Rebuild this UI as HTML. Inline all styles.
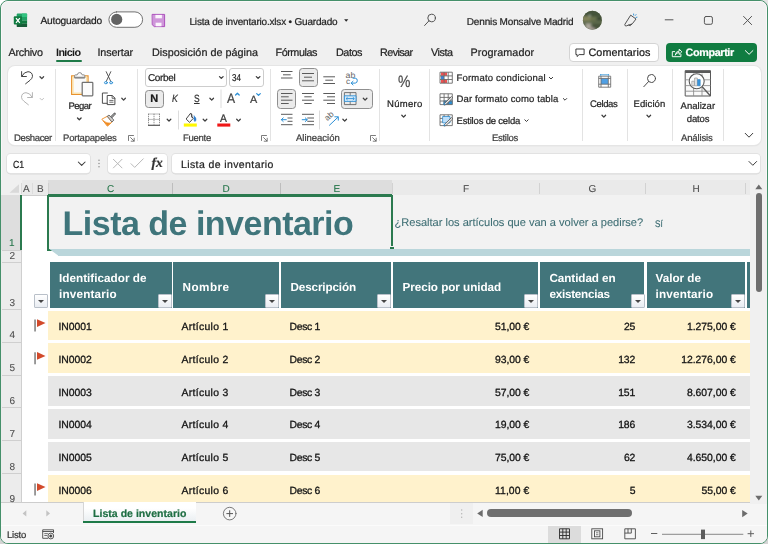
<!DOCTYPE html>
<html lang="es">
<head>
<meta charset="utf-8">
<title>Lista de inventario.xlsx - Excel</title>
<style>
html,body{margin:0;padding:0;background:#d4d4d4;}
body{width:768px;height:544px;overflow:hidden;position:relative;font-family:"Liberation Sans",sans-serif;}
#win{position:absolute;left:0;top:0;width:766px;height:542px;border:1px solid #45906a;border-radius:8px;background:#f0f0f0;overflow:hidden;}
#stage{position:absolute;left:-1px;top:-1px;width:768px;height:544px;}
#txt{position:absolute;left:0;top:0;width:768px;height:544px;will-change:transform;}
.a{position:absolute;}
.t{position:absolute;white-space:nowrap;line-height:1;text-rendering:geometricPrecision;-webkit-text-stroke:.22px currentColor;color:#242424;font-family:"Liberation Sans",sans-serif;}
.sep{position:absolute;width:1.200px;background:#e3e3e3;top:68.700px;height:72.300px;}
.box{position:absolute;background:#fff;border:1px solid #dcdcdc;border-radius:4px;box-sizing:border-box;}
.fbx{position:absolute;top:153.600px;height:19.400px;background:#fff;border-radius:3.500px;box-shadow:0 0 0 .9px #e2e2e2,0 .8px 0 .6px #d9d9d9;}
.sel{position:absolute;background:#ebebeb;border:1px solid #8f8f8f;border-radius:3.5px;box-sizing:border-box;}
.hc{position:absolute;background:#42757b;top:262px;height:46px;}
.fb{position:absolute;top:294px;width:14px;height:14px;background:linear-gradient(#ffffff,#e9edf2);border:1px solid #b9c0c9;box-sizing:border-box;border-radius:1px;}
.fb:after{content:"";position:absolute;left:3.100px;top:4.700px;border-left:3px solid transparent;border-right:3px solid transparent;border-top:3.500px solid #454545;}
.row{position:absolute;left:48px;width:701.500px;height:29.800px;}
.y{background:#fff2cc;}
.g{background:#e7e7e7;}
.cd{position:absolute;top:182.500px;width:1px;height:11.500px;background:#d2d2d2;}
.rd{position:absolute;left:2px;width:19px;height:1px;background:#cfcfcf;}
svg{position:absolute;overflow:visible;text-rendering:geometricPrecision;}
</style>
</head>
<body>
<div class="a" style="left:0;top:0;width:10px;height:10px;background:#fff;"></div><div class="a" style="left:758px;top:0;width:10px;height:10px;background:#e4e4e4;"></div>
<div id="win"><div id="stage">
<!-- inner highlight of window frame -->
<div class="a" style="left:1px;top:1px;width:764px;height:540px;border:1px solid #faf7f8;border-radius:7px;"></div>
<!-- ===== ribbon panel ===== -->
<div class="a" style="left:8px;top:65.500px;width:752.500px;height:79.500px;background:#fff;border-radius:7px;box-shadow:0 0 0 1px #e5e5e5,0 1px 1.500px rgba(0,0,0,.10);"></div>
<!-- tab underline -->
<div class="a" style="left:56px;top:60px;width:26px;height:2px;background:#1e7a48;border-radius:1px;"></div>
<!-- Comentarios / Compartir buttons -->
<div class="box" style="left:568.800px;top:42.600px;width:89.800px;height:19px;border-color:#d4d4d4;"></div>
<div class="a" style="left:666px;top:42.500px;width:91.400px;height:19.300px;background:#107c41;border-radius:4px;"></div>
<!-- ribbon separators -->
<div class="sep" style="left:55px"></div><div class="sep" style="left:137px"></div><div class="sep" style="left:269.500px"></div>
<div class="sep" style="left:379px"></div><div class="sep" style="left:429.300px"></div><div class="sep" style="left:582px"></div>
<div class="sep" style="left:626.500px"></div><div class="sep" style="left:672px"></div><div class="sep" style="left:723px"></div>
<!-- font boxes -->
<div class="box" style="left:144.600px;top:68.200px;width:82px;height:18.400px;border-color:#cdcdcd;border-radius:3px;"></div>
<div class="box" style="left:229px;top:68.200px;width:34.600px;height:18.400px;border-color:#cdcdcd;border-radius:3px;"></div>
<!-- selected toggle buttons -->
<div class="sel" style="left:144.800px;top:89.500px;width:19.200px;height:18.800px;"></div>
<div class="sel" style="left:298.500px;top:68px;width:19px;height:19.300px;"></div>
<div class="sel" style="left:277.300px;top:89px;width:19px;height:19.500px;"></div>
<div class="sel" style="left:340.500px;top:89px;width:32.300px;height:19.500px;"></div>
<!-- ===== formula bar ===== -->
<div class="fbx" style="left:7.400px;width:82.500px;"></div>
<div class="fbx" style="left:107.800px;width:59px;"></div>
<div class="fbx" style="left:171.800px;width:588.600px;"></div>
<!-- ===== grid ===== -->
<div class="a" style="left:1px;top:180px;width:748.500px;height:322px;background:#fff;"></div>
<!-- column header strip -->
<div class="a" style="left:1px;top:180px;width:748.500px;height:15px;background:#eaeaea;"></div>
<div class="a" style="left:1px;top:180px;width:20.500px;height:15px;background:#f0f0f0;"></div>
<div class="a" style="left:48px;top:180px;width:344px;height:14px;background:#dddddd;"></div>
<div class="a" style="left:1px;top:194.500px;width:748.500px;height:1px;background:#cfcfcf;"></div>
<div class="a" style="left:48px;top:193.700px;width:344px;height:2px;background:#2b7a4f;"></div>
<div class="cd" style="left:21px;background:#d9d9d9"></div><div class="cd" style="left:31.500px;background:#dcdcdc"></div><div class="cd" style="left:47.500px;background:#d0d0d0"></div>
<div class="cd" style="left:172px;background:#bdbdbd"></div><div class="cd" style="left:279.500px;background:#bdbdbd"></div><div class="cd" style="left:391.500px"></div>
<div class="cd" style="left:538.500px"></div><div class="cd" style="left:645px"></div><div class="cd" style="left:745px"></div>
<!-- row header strip -->
<div class="a" style="left:1px;top:195px;width:20.500px;height:307px;background:#ececec;"></div>
<div class="a" style="left:1px;top:195px;width:20px;height:54.500px;background:#dedede;"></div>
<div class="a" style="left:20px;top:195px;width:2px;height:54.800px;background:#2b7a4f;"></div>
<div class="a" style="left:21px;top:249.800px;width:1px;height:252px;background:#cfcfcf;"></div>
<div class="rd" style="top:249.500px"></div><div class="rd" style="top:262px"></div><div class="rd" style="top:308.500px"></div><div class="rd" style="top:341.500px"></div>
<div class="rd" style="top:374.500px"></div><div class="rd" style="top:407.300px"></div><div class="rd" style="top:440px"></div><div class="rd" style="top:473px"></div>
<!-- row 1 background -->
<div class="a" style="left:48px;top:195px;width:701.500px;height:55px;background:#f2f2f2;"></div>
<!-- selection border C1:E1 -->
<div class="a" style="left:47.300px;top:194.800px;width:345.800px;height:56px;border:2px solid #2b7a4f;box-sizing:border-box;"></div>
<div class="a" style="left:389px;top:246.300px;width:6px;height:4px;background:#f2f2f2;"></div>
<div class="a" style="left:390px;top:247.300px;width:4px;height:3px;background:#2b7a4f;"></div>
<!-- light blue band (drawn over the selection's bottom edge) -->
<div class="a" style="left:49.300px;top:249.100px;width:700.200px;height:6.900px;background:#bad6db;clip-path:polygon(0 0,100% 0,100% 100%,9.500px 100%);"></div>
<div class="a" style="left:58px;top:249.100px;width:691.500px;height:6.900px;background:#bad6db;"></div>
<!-- header cells -->
<div class="hc" style="left:50px;width:121.500px"></div>
<div class="hc" style="left:173px;width:105.500px"></div>
<div class="hc" style="left:281px;width:109.500px"></div>
<div class="hc" style="left:393px;width:144.500px"></div>
<div class="hc" style="left:540px;width:104px"></div>
<div class="hc" style="left:646.500px;width:98px"></div>
<div class="hc" style="left:747px;width:2.500px"></div>
<div class="fb" style="left:34px"></div><div class="fb" style="left:157.700px"></div><div class="fb" style="left:265px"></div>
<div class="fb" style="left:377px"></div><div class="fb" style="left:524px"></div><div class="fb" style="left:630.500px"></div><div class="fb" style="left:731px"></div>
<!-- data rows -->
<div class="row y" style="top:310.500px"></div>
<div class="row y" style="top:343.300px"></div>
<div class="row g" style="top:376.100px"></div>
<div class="row g" style="top:408.900px"></div>
<div class="row g" style="top:441.700px"></div>
<div class="row y" style="top:474.500px"></div>
<!-- vertical scrollbar -->
<div class="a" style="left:749.500px;top:180px;width:17.500px;height:324px;background:#f0f0f0;"></div>
<div class="a" style="left:755.500px;top:193px;width:6.500px;height:98.500px;background:#6e6e6e;border-radius:3.500px;"></div>
<!-- sheet tab bar + status bar -->
<div class="a" style="left:1px;top:502px;width:748.500px;height:41px;background:#f5f5f5;"></div>
<div class="a" style="left:749.500px;top:504px;width:17.500px;height:39px;background:#f5f5f5;"></div>
<div class="a" style="left:1px;top:502px;width:748.500px;height:1px;background:#cdcdcd;"></div>
<div class="a" style="left:1px;top:524.500px;width:766px;height:1px;background:#fbfbfb;"></div>
<div class="a" style="left:450.300px;top:503.300px;width:22.700px;height:21.200px;background:#efefef;"></div>
<div class="a" style="left:82.700px;top:502px;width:113.300px;height:20px;background:linear-gradient(#ffffff 30%,#e9eef1);border-left:1px solid #d6d6d6;box-sizing:border-box;"></div>
<div class="a" style="left:82.700px;top:520.800px;width:113.300px;height:2.200px;background:#1e7a48;"></div>
<div class="a" style="left:486.700px;top:509.300px;width:145.600px;height:7.800px;background:#6f6f6f;border-radius:4px;"></div>
<div class="a" style="left:548.300px;top:526px;width:32.400px;height:17px;background:#dcdcdc;"></div>
<!-- ===== icon overlay (page coordinates) ===== -->
<svg class="a" style="left:0;top:0" width="768" height="544" viewBox="0 0 768 544" fill="none" stroke-linecap="round" stroke-linejoin="round">
<defs>
<radialGradient id="av" cx="0.45" cy="0.4" r="0.7"><stop offset="0" stop-color="#5a6647"/><stop offset="0.6" stop-color="#4a553a"/><stop offset="1" stop-color="#6f735f"/></radialGradient>
<linearGradient id="clip" x1="0" y1="0" x2="0" y2="1"><stop offset="0" stop-color="#fff"/><stop offset="1" stop-color="#fdecc8"/></linearGradient>
<clipPath id="avc"><circle cx="592.4" cy="20.3" r="9.5"/></clipPath>
<filter id="soft" x="-20%" y="-20%" width="140%" height="140%"><feGaussianBlur stdDeviation="1.1"/></filter>
</defs>
<!-- Excel logo -->
<g stroke="none">
<path d="M17.6 13.6h8.6a.9.9 0 0 1 .9.9v2.5H16.7v-2.5a.9.9 0 0 1 .9-.9z" fill="#21a366"/>
<path d="M22 13.6h4.2a.9.9 0 0 1 .9.9v2.5H22z" fill="#33c481"/>
<rect x="16.7" y="17" width="5.3" height="3.4" fill="#107c41"/><rect x="22" y="17" width="5.1" height="3.4" fill="#21a366"/>
<rect x="16.7" y="20.4" width="5.3" height="3.4" fill="#185c37"/><rect x="22" y="20.4" width="5.1" height="3.4" fill="#107c41"/>
<path d="M16.7 23.8h10.4v2.4a.9.9 0 0 1-.9.9h-8.6a.9.9 0 0 1-.9-.9z" fill="#185c37"/>
<rect x="13.8" y="16.3" width="8.2" height="8.2" rx="0.9" fill="#107c41"/>
<path d="M16 18.2l3.8 4.6M19.8 18.2L16 22.8" stroke="#fff" stroke-width="1.25" stroke-linecap="butt"/>
</g>
<!-- autosave toggle -->
<rect x="108.9" y="11.9" width="33.7" height="15.4" rx="7.7" fill="#fff" stroke="#616161" stroke-width="0.9"/>
<circle cx="116.7" cy="19.4" r="5.6" fill="#636363"/>
<!-- save icon -->
<path d="M152.5 14.4h12.1v12.2h-10.3l-1.8-1.6z" fill="#cf96da" stroke="#a644b8" stroke-width="0.9" stroke-linejoin="miter"/>
<rect x="155.4" y="14.9" width="6.5" height="3.4" fill="#fbf4fc"/>
<rect x="155.6" y="22.7" width="5.9" height="3.6" fill="#fbf4fc"/>
<!-- title dropdown arrow -->
<path d="M344.100 19.300h4.200l-2.100 2.500z" fill="#262626" stroke="none"/>
<!-- search -->
<circle cx="431.6" cy="18" r="3.8" stroke="#4a4a4a" stroke-width="0.95"/>
<path d="M428.9 20.9l-4.3 4.6" stroke="#4a4a4a" stroke-width="0.95"/>
<!-- avatar -->
<circle cx="592.400" cy="20.300" r="9.500" fill="#505d42" stroke="none"/>
<g clip-path="url(#avc)" stroke="none" filter="url(#soft)">
<rect x="582" y="10" width="21" height="6.500" fill="#44533a"/>
<rect x="582" y="16.300" width="9.500" height="4.600" fill="#83835a"/>
<rect x="590" y="17" width="6" height="3.500" fill="#6c7550"/>
<rect x="582" y="21" width="21" height="2.500" fill="#5d6a4b"/>
<rect x="585.400" y="23.400" width="5.800" height="5.600" fill="#aaa69a"/>
<rect x="589" y="27.300" width="6" height="3" fill="#a89c98"/>
<rect x="588.700" y="14.800" width="1.800" height="1.800" fill="#a4b0a6"/>
<rect x="597.800" y="18" width="3.200" height="1.500" fill="#272f25"/>
<rect x="593" y="24" width="9" height="4" fill="#46523a"/>
</g>
<!-- megaphone -->
<g stroke="#4a4a4a" stroke-width="0.95">
<path d="M631 15.400l5 3.600-3.700 4.800-6 2.100q-1.600.4-1.500-1.100z"/>
<path d="M628.700 25.200q1.500 1.900 3.100-.9"/>
</g>
<g stroke="#2b8fd6" stroke-width="0.95"><path d="M633.6 14v1M636 14.6l-.7.8M637 17.200l-1 .2"/></g>
<!-- window controls -->
<g stroke="#555" stroke-width="1">
<path d="M665.2 19.8h7.8"/>
<rect x="704.4" y="16.5" width="8" height="7.8" rx="1.6"/>
<path d="M743.6 16.400l8 8.200M751.600 16.400l-8 8.200"/>
</g>
<!-- comments icon -->
<path d="M576.3 49h7.800v5.600h-5l-2 1.900v-1.900h-.8z" stroke="#2a2a2a" stroke-width="0.9" stroke-linejoin="miter"/>
<!-- share icon + chevron -->
<g stroke="#fff" stroke-width="0.95">
<path d="M674.6 51.6h-2.300v5.100h8.600v-2.300"/>
<path d="M675.300 54.800q.3-3.600 3.900-3.700v-2l2.600 2.700-2.600 2.600v-1.900q-2.400-.1-3.900 2.300z"/>
<path d="M745.300 50.600l3.800 3.700 3.800-3.700" stroke-width="1"/>
</g>
<!-- ===== ribbon icons ===== -->
<!-- undo / redo -->
<g stroke="#454545" stroke-width="1">
<path d="M21.600 71.600v4.900h4.800"/>
<path d="M21.800 76.300q2.300-4.600 6.200-4.600 4.400.2 4.500 4.600-.2 2.200-2.500 4l-4.400 3.500"/>
<path d="M40 76.800l1.800 1.800 1.800-1.800" stroke-width="1.300"/>
</g>
<g stroke="#b4b4b4" stroke-width="1">
<path d="M32.400 92.600v4.900h-4.800"/>
<path d="M32.200 97.300q-2.300-4.600-6.200-4.600-4.400.2-4.500 4.600.2 2.200 2.500 4l4.400 3.500"/>
<path d="M40 98.300l1.800 1.800 1.800-1.800" stroke="#c4c4c4"/>
</g>
<!-- paste -->
<path d="M71.700 75.800h16.300v18.600h-16.300z" fill="#fafafa" stroke="#e8922f" stroke-width="1.300" stroke-linejoin="miter"/>
<path d="M73 77.100h13.700v16h-13.700z" stroke="#fde4ab" stroke-width="1.300" stroke-linejoin="miter"/>
<path d="M74.600 77.600v-1.900q0-.8.800-.8h1.800q.5-2.300 2.500-2.300t2.500 2.300h1.800q.8 0 .8.800v1.900z" fill="#fbfbfb" stroke="#8a8a8a" stroke-width="1"/>
<path d="M74.600 77.500h10.200" stroke="#8a8a8a" stroke-width="1.500" stroke-linecap="butt"/>
<rect x="82.200" y="82.400" width="10.600" height="13.400" rx="0.700" fill="#fcfcfc" stroke="#727272" stroke-width="1.250"/>
<path d="M77.500 118l1.800 1.800 1.800-1.800" stroke="#3d3d3d" stroke-width="1.300"/>
<!-- cut -->
<g stroke="#454545" stroke-width="0.9"><path d="M106.200 71.700l4.500 9.600M110.800 71.700l-4.500 9.600"/></g>
<g stroke="#2b8fd6" stroke-width="0.95"><ellipse cx="105.900" cy="82.700" rx="1.500" ry="1.100"/><ellipse cx="111.100" cy="82.700" rx="1.500" ry="1.100"/></g>
<!-- copy -->
<g stroke="#454545" stroke-width="0.95">
<path d="M107.400 93h-5v10.300h5"/>
<path d="M107.600 95.500h4.700l2.600 2.600v6.500h-7.300z" fill="#fff"/>
<path d="M112.100 95.600v2.700h2.700" stroke-width="0.8"/>
<path d="M109.700 100.400h3.400M109.700 102.200h3.400" stroke-width="0.8"/>
<path d="M121.800 98.300l1.800 1.800 1.800-1.800" stroke-width="1.300"/>
</g>
<!-- format painter -->
<path d="M102.200 119l5.300-2.800 4.700 5.600-4.500 4z" fill="#fff" stroke="#ee8a22" stroke-width="0.900"/>
<path d="M103.400 120.900q3.600 2.600 7.400 2.200l-3.100 2.700z" fill="#f08c22" stroke="#ee8a22" stroke-width="0.600"/>
<path d="M110.900 117.600l3.800-3.800" stroke="#5a5a5a" stroke-width="2.300" stroke-linecap="round"/>
<path d="M111.100 117.400l3.500-3.500" stroke="#d6d6d6" stroke-width="0.800" stroke-linecap="round"/>
<path d="M107.500 116.200l1.500-1.200 4.900 5.100-1.700 1.700z" fill="#cfcfcf" stroke="#555" stroke-width="0.800"/>
<!-- launcher icons -->
<g stroke="#5a5a5a" stroke-width="0.8">
<path d="M128.500 140.500v-5h5M130.600 137.600l3.400 3.400M134.200 138.200v3h-3"/>
<path d="M261.500 140.500v-5h5M263.600 137.600l3.400 3.400M267.200 138.200v3h-3"/>
<path d="M370.500 140.500v-5h5M372.600 137.600l3.400 3.400M376.200 138.200v3h-3"/>
</g>
<!-- font box chevrons -->
<g stroke="#3d3d3d" stroke-width="1.300">
<path d="M219.500 76.600l1.800 1.800 1.800-1.800"/><path d="M256.300 76.600l1.800 1.800 1.800-1.800"/>
<path d="M209.900 98.300l1.800 1.800 1.800-1.800"/>
<path d="M167.200 119.300l1.800 1.800 1.800-1.800"/><path d="M203.200 119.300l1.800 1.800 1.800-1.800"/><path d="M236.700 119.300l1.800 1.800 1.800-1.800"/>
<path d="M342.900 119.300l1.800 1.800 1.800-1.800"/><path d="M363.300 98.300l1.800 1.800 1.800-1.800"/>
</g>
<!-- grow / shrink carets -->
<g stroke="#2b8fd6" stroke-width="1.250"><path d="M235.600 95l1.800-1.800 1.800 1.800"/><path d="M256.700 93.600l1.800 1.800 1.800-1.800"/></g>
<!-- small separators -->
<g stroke="#dcdcdc" stroke-width="1" stroke-linecap="butt"><path d="M221 89.500v18.500M178.500 110.500v19M319.500 110.500v19"/></g>
<!-- borders icon -->
<g stroke="#666" stroke-width="0.9" stroke-dasharray="1 1" stroke-linecap="butt"><path d="M148.500 113.800v10.600M154 113.800v10.600M159.500 113.800v10.600M148.500 114h11M148.500 119.400h11"/></g>
<path d="M148 125.300h12" stroke="#333" stroke-width="1.1" stroke-linecap="butt"/>
<!-- fill colour -->
<path d="M190.100 113.900l-4 5.100 3.500 3.400 3.800-4.200-1.500-1.200-.2-3.100q-.8-.9-1.600 0z" fill="#fdfdfd" stroke="#3f3f3f" stroke-width="0.950"/>
<path d="M191.500 114.300l.3 2.900" stroke="#3f3f3f" stroke-width="0.800"/>
<path d="M194.100 116c2.500 1.600 2.300 4.600.9 5.600-1.200-.2-1.100-2.600-.9-5.600z" fill="#2f7fd0" stroke="#2f7fd0" stroke-width="0.500"/>
<rect x="183.800" y="123.500" width="13" height="3.100" fill="#fff800" stroke="none"/>
<!-- font colour bar -->
<rect x="217.300" y="123.500" width="13" height="3.100" fill="#f01818" stroke="none"/>
<!-- alignment icons -->
<g stroke="#5a5a5a" stroke-width="1" stroke-linecap="butt">
<path d="M281 71.500h11.500M283 74.800h7.700M281 78h11.500"/>
<path d="M302 73.500h12M304 77.200h8M302 80.800h12"/>
<path d="M323.300 76.800h11.700M325.300 80.200h7.700M323.300 83.500h11.700"/>
<path d="M281 93.500h11.500M281 96.800h7.700M281 100.200h11.500M281 103.500h7.700"/>
<path d="M302 93.500h12M304.300 96.800h7.400M302 100.200h12M304.300 103.500h7.400"/>
<path d="M323.300 93.500h11.700M327 96.800h8M323.300 100.200h11.700M327 103.500h8"/>
<path d="M281 114.300h11.500M287.500 118h5M287.500 121.300h5M281 124.700h11.500"/>
<path d="M302 114.300h12M307.300 118h6.700M307.300 121.300h6.700M302 124.700h12"/>
</g>
<g stroke="#2b8fd6" stroke-width="1"><path d="M281.300 119.700h5M283.200 117.900l-1.900 1.800 1.900 1.800"/><path d="M302.200 119.700h5M305.300 117.900l1.900 1.800-1.900 1.800"/></g>
<!-- wrap-text / orientation letters -->
<g fill="#666" stroke="none" font-family="'Liberation Sans',sans-serif" font-size="8.200">
<text x="345.600" y="77.800" textLength="9.800" lengthAdjust="spacingAndGlyphs">ab</text>
<text x="345.900" y="83.600">c</text>
<text x="327.300" y="121.300" transform="rotate(-42 327.300 121.300)" textLength="9.600" lengthAdjust="spacingAndGlyphs">ab</text>
</g>
<!-- wrap-text arrow -->
<path d="M353 78.200h2.300q2 .2 2 2.400t-2 2.500h-4M353 81.300l-1.900 1.800 1.900 1.800" stroke="#2b8fd6" stroke-width="1"/>
<!-- merge & centre -->
<g stroke-linecap="butt">
<rect x="344.400" y="92.600" width="11.600" height="12" stroke="#666" stroke-width="0.9"/>
<rect x="344.400" y="95.800" width="11.600" height="5.600" fill="#d6eafa" stroke="#2b8fd6" stroke-width="0.9"/>
<path d="M350.200 92.600v3M350.200 101.500v3" stroke="#666" stroke-width="0.8"/>
<path d="M346.200 98.600h8M347.600 97.200l-1.500 1.400 1.500 1.400M352.800 97.200l1.500 1.400-1.500 1.400" stroke="#2b8fd6" stroke-width="0.9"/>
</g>
<!-- orientation arrow -->
<path d="M329.500 125.200l8.500-8M334.800 116.800h3.500v3.400" stroke="#2b8fd6" stroke-width="1"/>
<!-- number chevrons etc -->
<g stroke="#3d3d3d" stroke-width="1.300">
<path d="M401.800 115.300l1.800 1.800 1.800-1.800"/>
<path d="M602 115.300l1.800 1.800 1.800-1.800"/>
<path d="M647 115.300l1.800 1.800 1.800-1.800"/>
<path d="M549.300 77.300l1.700 1.700 1.700-1.700" stroke-width="1"/>
<path d="M563.300 98.500l1.700 1.700 1.700-1.700" stroke-width="1"/>
<path d="M524.800 119.800l1.700 1.700 1.700-1.700" stroke-width="1"/>
<path d="M745.200 133.300l3.800 3.900 3.800-3.900" stroke-width="1"/>
</g>
<!-- conditional formatting -->
<g stroke-linecap="butt">
<rect x="441" y="72.300" width="6" height="3.500" fill="#ee5050" stroke="none"/>
<rect x="441" y="79.500" width="6" height="3.500" fill="#ee5050" stroke="none"/>
<rect x="441" y="75.900" width="3" height="3.500" fill="#3b86d6" stroke="none"/>
<path d="M440 72.200h12.300v11h-12.300zM440 75.900h12.300M440 79.500h12.300M444.100 72.200v11M448.200 72.200v11" stroke="#6b6b6b" stroke-width="0.9"/>
<!-- format as table -->
<rect x="443.500" y="100.500" width="9" height="4.200" fill="#2b8fd6" stroke="none"/>
<path d="M440 93.800h12.300v10.800h-12.300zM440 97.400h12.300M440 101h12.300M444.100 93.800v10.800M448.200 93.800v10.800" stroke="#6b6b6b" stroke-width="0.9"/>
<path d="M444.700 103.200l6.800-6.600 1.300 1.300-6.800 6.600-2 .6z" fill="#eaeaea" stroke="#4f4f4f" stroke-width="0.8"/>
<path d="M443.300 104.800l2.400-.4-1.700-1.600z" fill="#2b8fd6" stroke="none"/>
<!-- cell styles -->
<rect x="442.600" y="116.500" width="7.400" height="6.400" fill="#bfe0fb" stroke="#2b8fd6" stroke-width="0.8"/>
<path d="M440 114.800h12.300v10.800h-12.300zM440 118.400h2.600M440 122h2.600M450 118.400h2.300M444.100 114.800v1.700M448.200 114.800v1.700" stroke="#6b6b6b" stroke-width="0.9"/>
<path d="M444.700 124.200l6.800-6.600 1.300 1.300-6.800 6.600-2 .6z" fill="#eaeaea" stroke="#4f4f4f" stroke-width="0.8"/>
<path d="M443.300 125.900l2.400-.4-1.700-1.600z" fill="#2b8fd6" stroke="none"/>
<!-- cells -->
<rect x="601" y="78.400" width="7.200" height="5.800" fill="#4f9fe4" stroke="none"/>
<path d="M598.700 76.200h12v11h-12zM598.700 78.400h12M598.700 84.200h12M601 76.200v11M608.300 76.200v11" stroke="#6a6a6a" stroke-width="0.85"/>
<path d="M600.600 74.800h8M600.600 74v1.700M608.600 74v1.700" stroke="#2b8fd6" stroke-width="0.8"/>
</g>
<!-- editing (search) -->
<circle cx="651.500" cy="78.500" r="4" stroke="#4a4a4a" stroke-width="1"/>
<path d="M648.600 81.500l-4.800 5.200" stroke="#4a4a4a" stroke-width="1"/>
<!-- analyse data -->
<g stroke-linecap="butt">
<rect x="685.200" y="70.700" width="25.300" height="25.300" fill="#fafafa" stroke="#595959" stroke-width="1"/>
<rect x="685.200" y="70.700" width="25.300" height="2.300" fill="#595959" stroke="none"/>
<path d="M685.200 79.800h25.300M685.200 85.600h25.300M685.200 91.200h25.300M693.600 73.700v22.300M702 73.700v22.300" stroke="#8a8a8a" stroke-width="0.85"/>
<circle cx="696.700" cy="81.300" r="7.500" fill="#fff" stroke="#595959" stroke-width="1.1"/>
<path d="M702.200 86.800l8.300 9.200" stroke="#595959" stroke-width="1.3"/>
<rect x="691.800" y="81.200" width="2.500" height="4.600" fill="#e6e6e6" stroke="#8a8a8a" stroke-width="0.6"/>
<rect x="694.600" y="78" width="2.700" height="7.800" fill="#e6e6e6" stroke="#8a8a8a" stroke-width="0.6"/>
<rect x="697.600" y="79.600" width="2.600" height="6.200" fill="#3a96dd" stroke="#2b7cc0" stroke-width="0.6"/>
</g>
<!-- ===== formula bar icons ===== -->
<path d="M78.300 162l3.400 3.400 3.400-3.400" stroke="#3a3a3a" stroke-width="1.050"/>
<g fill="#858585" stroke="none"><circle cx="99" cy="160.300" r=".7"/><circle cx="99" cy="163.500" r=".7"/><circle cx="99" cy="166.700" r=".7"/></g>
<path d="M113.400 159.300l8.600 8.600M122 159.300l-8.600 8.600" stroke="#b9b9b9" stroke-width="1"/>
<path d="M131 163.700l3.700 3.700 8.600-8.600" stroke="#b9b9b9" stroke-width="1"/>
<path d="M749 161.500l3.800 3.800 3.800-3.800" stroke="#3a3a3a" stroke-width="1"/>
<!-- select-all triangle -->
<path d="M19 184.300v8.400h-9.400z" fill="#d9d9d9" stroke="none"/>
<!-- flags -->
<g stroke="none"><rect x="34.300" y="319.500" width="1.500" height="12" fill="#7d7d7d"/><path d="M37 319.200l8.500 3.900-8.500 3.900z" fill="#d24a2b"/></g>
<g stroke="none" transform="translate(0 32.800)"><rect x="34.300" y="319.500" width="1.500" height="12" fill="#7d7d7d"/><path d="M37 319.200l8.500 3.900-8.500 3.900z" fill="#d24a2b"/></g><g stroke="none" transform="translate(0 164)"><rect x="34.300" y="319.500" width="1.500" height="12" fill="#7d7d7d"/><path d="M37 319.200l8.500 3.900-8.500 3.900z" fill="#d24a2b"/></g>
<!-- vertical scrollbar arrows -->
<g fill="#6c6c6c" stroke="none"><path d="M755.300 189.200l3.500-4.700 3.500 4.700z"/><path d="M755.300 495.700l3.500 4.700 3.500-4.700z"/>
<path d="M482.700 509.700v7.400l-5.500-3.700z"/><path d="M742.200 509.900v7.400l5.500-3.700z"/></g>
<!-- sheet nav arrows -->
<g fill="#c3c3c3" stroke="none"><path d="M26.300 510.300v6.200l-3.700-3.100z"/><path d="M46.300 510.300v6.200l3.700-3.100z"/></g>
<!-- new sheet -->
<circle cx="229.700" cy="513.600" r="6.300" stroke="#6b6b6b" stroke-width="0.9" fill="#f7f7f7"/>
<path d="M226.400 513.600h6.600M229.700 510.300v6.600" stroke="#555" stroke-width="1" stroke-linecap="butt"/>
<!-- splitter dots -->
<g fill="#b3b3b3" stroke="none"><circle cx="461.700" cy="510" r=".7"/><circle cx="461.700" cy="513.700" r=".7"/><circle cx="461.700" cy="517.300" r=".7"/></g>
<!-- status: macro icon -->
<g stroke="#3f3f3f" stroke-width="0.85" stroke-linecap="butt" stroke-linejoin="miter">
<path d="M48 538.300h-5.300v-8.500h10.800v3.200M42.700 531.500h10.800"/>
<path d="M44.300 533.600h3.600M44.300 535.500h2.800" stroke-width="0.7"/>
<circle cx="50.800" cy="536" r="2.900"/><circle cx="50.800" cy="536" r="1.100" fill="#3f3f3f"/>
</g>
<!-- view buttons -->
<g stroke="#333" stroke-width="0.95" stroke-linecap="butt" stroke-linejoin="miter">
<path d="M559.500 528.800h10v10h-10zM562.800 528.800v10M566.200 528.800v10M559.500 532.100h10M559.500 535.500h10"/>
</g>
<g stroke="#4a4a4a" stroke-width="0.9" stroke-linecap="butt" stroke-linejoin="miter">
<rect x="591.800" y="528.800" width="10.800" height="10"/><rect x="594.500" y="530.800" width="5.400" height="6"/><path d="M596 532.800h2.400M596 534.700h2.400" stroke-width="0.7"/>
<path d="M624.800 528.800h10.600v10h-10.600zM628 528.800v4.300M631.300 528.800v4.300M624.800 533.100h6.500" />
</g>
<!-- zoom slider -->
<g stroke="#5f5f5f" stroke-width="1" stroke-linecap="butt">
<path d="M651 533.500h6.300"/><path d="M662 534.300h81.300" stroke="#7d7d7d" stroke-width="0.9"/>
<path d="M747.600 533.700h6.400M750.800 530.500v6.400"/>
</g>
<rect x="701" y="529.600" width="4" height="9.500" fill="#5c5c5c" stroke="none"/>
</svg>

<!-- text labels -->
<div id="txt">
<span class="t" style="left:40.50px;top:17.37px;font-size:10.2px;letter-spacing:-0.213px;">Autoguardado</span>
<span class="t" style="left:189.50px;top:17.54px;font-size:10px;letter-spacing:-0.195px;">Lista de inventario.xlsx • Guardado</span>
<span class="t" style="left:466.80px;top:17.54px;font-size:10px;letter-spacing:-0.157px;">Dennis Monsalve Madrid</span>
<span class="t" style="left:8.50px;top:48.36px;font-size:10.8px;letter-spacing:-0.250px;">Archivo</span>
<span class="t" style="left:56.00px;top:48.36px;font-size:10.8px;letter-spacing:-0.620px;font-weight:700;color:#1a1a1a;-webkit-text-stroke-width:0;">Inicio</span>
<span class="t" style="left:97.50px;top:48.36px;font-size:10.8px;letter-spacing:-0.144px;">Insertar</span>
<span class="t" style="left:152.00px;top:48.36px;font-size:10.8px;letter-spacing:0.018px;">Disposición de página</span>
<span class="t" style="left:275.50px;top:48.36px;font-size:10.8px;letter-spacing:-0.442px;">Fórmulas</span>
<span class="t" style="left:336.00px;top:48.36px;font-size:10.8px;letter-spacing:-0.452px;">Datos</span>
<span class="t" style="left:380.00px;top:48.36px;font-size:10.8px;letter-spacing:-0.584px;">Revisar</span>
<span class="t" style="left:431.00px;top:48.36px;font-size:10.8px;letter-spacing:-0.451px;">Vista</span>
<span class="t" style="left:470.50px;top:48.36px;font-size:10.8px;letter-spacing:0.059px;">Programador</span>
<span class="t" style="left:588.50px;top:48.36px;font-size:10.8px;letter-spacing:0.069px;color:#1a1a1a;">Comentarios</span>
<span class="t" style="left:685.50px;top:48.36px;font-size:10.8px;letter-spacing:-0.361px;font-weight:700;color:#ffffff;">Compartir</span>
<span class="t" style="left:68.50px;top:102.26px;font-size:9.5px;letter-spacing:-0.547px;">Pegar</span>
<span class="t" style="left:148.00px;top:73.53px;font-size:10px;letter-spacing:-0.347px;">Corbel</span>
<span class="t" style="left:231.70px;top:73.53px;font-size:10px;transform:scaleX(0.804);transform-origin:0 0;">34</span>
<span class="t" style="left:150.20px;top:93.69px;font-size:11px;font-weight:700;color:#1a1a1a;transform:scaleX(1.000);transform-origin:0 0;">N</span>
<span class="t" style="left:172.20px;top:94.11px;font-size:10.5px;color:#333;font-style:italic;transform:scaleX(0.825);transform-origin:0 0;">K</span>
<span class="t" style="left:194.20px;top:94.11px;font-size:10.5px;color:#333;text-decoration:underline;transform:scaleX(0.800);transform-origin:0 0;">S</span>
<span class="t" style="left:227.20px;top:91.92px;font-size:13.8px;color:#444;transform:scaleX(0.880);transform-origin:0 0;">A</span>
<span class="t" style="left:249.80px;top:95.80px;font-size:10.4px;color:#444;transform:scaleX(1.043);transform-origin:0 0;">A</span>
<span class="t" style="left:220.40px;top:114.49px;font-size:11px;color:#333;transform:scaleX(0.938);transform-origin:0 0;">A</span>
<span class="t" style="left:398.00px;top:73.83px;font-size:16.5px;color:#4a4a4a;transform:scaleX(0.847);transform-origin:0 0;">%</span>
<span class="t" style="left:387.00px;top:99.96px;font-size:9.5px;letter-spacing:0.299px;">Número</span>
<span class="t" style="left:456.50px;top:73.96px;font-size:9.5px;letter-spacing:0.198px;">Formato condicional</span>
<span class="t" style="left:456.50px;top:95.16px;font-size:9.5px;letter-spacing:0.120px;">Dar formato como tabla</span>
<span class="t" style="left:456.50px;top:116.56px;font-size:9.5px;letter-spacing:-0.184px;">Estilos de celda</span>
<span class="t" style="left:590.00px;top:99.96px;font-size:9.5px;letter-spacing:-0.364px;">Celdas</span>
<span class="t" style="left:633.50px;top:99.96px;font-size:9.5px;letter-spacing:0.104px;">Edición</span>
<span class="t" style="left:680.60px;top:101.76px;font-size:9.5px;letter-spacing:0.020px;">Analizar</span>
<span class="t" style="left:686.80px;top:114.56px;font-size:9.5px;letter-spacing:-0.147px;">datos</span>
<span class="t" style="left:14.00px;top:134.16px;font-size:9.5px;letter-spacing:-0.356px;color:#3c3c3c;">Deshacer</span>
<span class="t" style="left:63.00px;top:134.16px;font-size:9.5px;letter-spacing:-0.203px;color:#3c3c3c;">Portapapeles</span>
<span class="t" style="left:183.00px;top:134.16px;font-size:9.5px;letter-spacing:-0.259px;color:#3c3c3c;">Fuente</span>
<span class="t" style="left:296.00px;top:134.16px;font-size:9.5px;letter-spacing:-0.006px;color:#3c3c3c;">Alineación</span>
<span class="t" style="left:492.00px;top:134.16px;font-size:9.5px;letter-spacing:-0.288px;color:#3c3c3c;">Estilos</span>
<span class="t" style="left:681.00px;top:134.16px;font-size:9.5px;letter-spacing:-0.141px;color:#3c3c3c;">Análisis</span>
<span class="t" style="left:13.25px;top:161.28px;font-size:10.3px;transform:scaleX(0.856);transform-origin:0 0;">C1</span>
<span class="t" style="left:151.50px;top:156.32px;font-size:13.5px;font-weight:700;color:#333;font-style:italic;font-family:'Liberation Serif', serif;">fx</span>
<span class="t" style="left:181.00px;top:160.11px;font-size:10.5px;letter-spacing:0.396px;">Lista de inventario</span>
<span class="t" style="left:23.00px;top:184.94px;font-size:10px;color:#4d4d4d;-webkit-text-stroke-width:.08px;">A</span>
<span class="t" style="left:37.00px;top:184.94px;font-size:10px;color:#4d4d4d;-webkit-text-stroke-width:.08px;">B</span>
<span class="t" style="left:107.00px;top:184.94px;font-size:10px;color:#217346;-webkit-text-stroke-width:.08px;">C</span>
<span class="t" style="left:222.50px;top:184.94px;font-size:10px;color:#217346;-webkit-text-stroke-width:.08px;">D</span>
<span class="t" style="left:333.50px;top:184.94px;font-size:10px;color:#217346;-webkit-text-stroke-width:.08px;">E</span>
<span class="t" style="left:463.00px;top:184.94px;font-size:10px;color:#4d4d4d;-webkit-text-stroke-width:.08px;">F</span>
<span class="t" style="left:588.50px;top:184.94px;font-size:10px;color:#4d4d4d;-webkit-text-stroke-width:.08px;">G</span>
<span class="t" style="left:692.50px;top:184.94px;font-size:10px;color:#4d4d4d;-webkit-text-stroke-width:.08px;">H</span>
<span class="t" style="left:9.00px;top:238.53px;font-size:10px;color:#217346;-webkit-text-stroke-width:.08px;">1</span>
<span class="t" style="left:9.50px;top:251.53px;font-size:10px;color:#4d4d4d;-webkit-text-stroke-width:.08px;">2</span>
<span class="t" style="left:9.50px;top:298.74px;font-size:10px;color:#4d4d4d;-webkit-text-stroke-width:.08px;">3</span>
<span class="t" style="left:9.50px;top:330.54px;font-size:10px;color:#4d4d4d;-webkit-text-stroke-width:.08px;">4</span>
<span class="t" style="left:9.50px;top:363.54px;font-size:10px;color:#4d4d4d;-webkit-text-stroke-width:.08px;">5</span>
<span class="t" style="left:9.50px;top:396.54px;font-size:10px;color:#4d4d4d;-webkit-text-stroke-width:.08px;">6</span>
<span class="t" style="left:9.50px;top:429.54px;font-size:10px;color:#4d4d4d;-webkit-text-stroke-width:.08px;">7</span>
<span class="t" style="left:9.50px;top:462.54px;font-size:10px;color:#4d4d4d;-webkit-text-stroke-width:.08px;">8</span>
<span class="t" style="left:9.50px;top:495.04px;font-size:10px;color:#4d4d4d;-webkit-text-stroke-width:.08px;">9</span>
<span class="t" style="left:62.60px;top:206.72px;font-size:34px;letter-spacing:-0.513px;font-weight:700;color:#3f757b;-webkit-text-stroke-width:0;">Lista de inventario</span>
<span class="t" style="left:394.50px;top:217.60px;font-size:11.1px;letter-spacing:-0.021px;color:#3d6d73;-webkit-text-stroke-width:.08px;">¿Resaltar los artículos que van a volver a pedirse?</span>
<span class="t" style="left:654.50px;top:220.47px;font-size:9.6px;color:#3d6d73;transform:scaleX(0.851);transform-origin:0 0;">Sí</span>
<span class="t" style="left:59.00px;top:273.10px;font-size:11.7px;letter-spacing:0.032px;font-weight:700;color:#ffffff;-webkit-text-stroke-width:0;">Identificador de</span>
<span class="t" style="left:59.00px;top:288.60px;font-size:11.7px;letter-spacing:0.199px;font-weight:700;color:#ffffff;-webkit-text-stroke-width:0;">inventario</span>
<span class="t" style="left:182.50px;top:282.10px;font-size:11.7px;letter-spacing:0.468px;font-weight:700;color:#ffffff;-webkit-text-stroke-width:0;">Nombre</span>
<span class="t" style="left:290.50px;top:282.10px;font-size:11.7px;letter-spacing:-0.126px;font-weight:700;color:#ffffff;-webkit-text-stroke-width:0;">Descripción</span>
<span class="t" style="left:402.50px;top:282.10px;font-size:11.7px;letter-spacing:-0.045px;font-weight:700;color:#ffffff;-webkit-text-stroke-width:0;">Precio por unidad</span>
<span class="t" style="left:549.50px;top:273.10px;font-size:11.7px;letter-spacing:-0.074px;font-weight:700;color:#ffffff;-webkit-text-stroke-width:0;">Cantidad en</span>
<span class="t" style="left:549.50px;top:288.60px;font-size:11.7px;letter-spacing:-0.253px;font-weight:700;color:#ffffff;-webkit-text-stroke-width:0;">existencias</span>
<span class="t" style="left:655.50px;top:273.10px;font-size:11.7px;font-weight:700;color:#ffffff;-webkit-text-stroke-width:0;">Valor de</span>
<span class="t" style="left:655.50px;top:288.60px;font-size:11.7px;letter-spacing:0.199px;font-weight:700;color:#ffffff;-webkit-text-stroke-width:0;">inventario</span>
<span class="t" style="left:58.50px;top:323.20px;font-size:10.4px;letter-spacing:-0.045px;color:#141414;-webkit-text-stroke-width:.3px;">IN0001</span>
<span class="t" style="left:181.50px;top:323.20px;font-size:10.4px;letter-spacing:0.321px;color:#141414;-webkit-text-stroke-width:.3px;">Artículo 1</span>
<span class="t" style="left:289.50px;top:323.20px;font-size:10.4px;letter-spacing:-0.312px;color:#141414;-webkit-text-stroke-width:.3px;">Desc 1</span>
<span class="t" style="left:495.00px;top:323.20px;font-size:10.4px;letter-spacing:-0.065px;color:#141414;-webkit-text-stroke-width:.3px;">51,00 €</span>
<span class="t" style="left:624.00px;top:323.20px;font-size:10.4px;letter-spacing:-0.279px;color:#141414;-webkit-text-stroke-width:.3px;">25</span>
<span class="t" style="left:687.00px;top:323.20px;font-size:10.4px;letter-spacing:-0.037px;color:#141414;-webkit-text-stroke-width:.3px;">1.275,00 €</span>
<span class="t" style="left:58.50px;top:356.00px;font-size:10.4px;letter-spacing:-0.045px;color:#141414;-webkit-text-stroke-width:.3px;">IN0002</span>
<span class="t" style="left:181.50px;top:356.00px;font-size:10.4px;letter-spacing:0.321px;color:#141414;-webkit-text-stroke-width:.3px;">Artículo 2</span>
<span class="t" style="left:289.50px;top:356.00px;font-size:10.4px;letter-spacing:-0.312px;color:#141414;-webkit-text-stroke-width:.3px;">Desc 2</span>
<span class="t" style="left:495.00px;top:356.00px;font-size:10.4px;letter-spacing:-0.065px;color:#141414;-webkit-text-stroke-width:.3px;">93,00 €</span>
<span class="t" style="left:618.25px;top:356.00px;font-size:10.4px;letter-spacing:-0.154px;color:#141414;-webkit-text-stroke-width:.3px;">132</span>
<span class="t" style="left:681.25px;top:356.00px;font-size:10.4px;letter-spacing:-0.036px;color:#141414;-webkit-text-stroke-width:.3px;">12.276,00 €</span>
<span class="t" style="left:58.50px;top:388.80px;font-size:10.4px;letter-spacing:-0.045px;color:#141414;-webkit-text-stroke-width:.3px;">IN0003</span>
<span class="t" style="left:181.50px;top:388.80px;font-size:10.4px;letter-spacing:0.321px;color:#141414;-webkit-text-stroke-width:.3px;">Artículo 3</span>
<span class="t" style="left:289.50px;top:388.80px;font-size:10.4px;letter-spacing:-0.312px;color:#141414;-webkit-text-stroke-width:.3px;">Desc 3</span>
<span class="t" style="left:495.00px;top:388.80px;font-size:10.4px;letter-spacing:-0.065px;color:#141414;-webkit-text-stroke-width:.3px;">57,00 €</span>
<span class="t" style="left:618.25px;top:388.80px;font-size:10.4px;letter-spacing:-0.154px;color:#141414;-webkit-text-stroke-width:.3px;">151</span>
<span class="t" style="left:687.00px;top:388.80px;font-size:10.4px;letter-spacing:-0.037px;color:#141414;-webkit-text-stroke-width:.3px;">8.607,00 €</span>
<span class="t" style="left:58.50px;top:420.60px;font-size:10.4px;letter-spacing:-0.045px;color:#141414;-webkit-text-stroke-width:.3px;">IN0004</span>
<span class="t" style="left:181.50px;top:420.60px;font-size:10.4px;letter-spacing:0.321px;color:#141414;-webkit-text-stroke-width:.3px;">Artículo 4</span>
<span class="t" style="left:289.50px;top:420.60px;font-size:10.4px;letter-spacing:-0.312px;color:#141414;-webkit-text-stroke-width:.3px;">Desc 4</span>
<span class="t" style="left:495.00px;top:420.60px;font-size:10.4px;letter-spacing:-0.065px;color:#141414;-webkit-text-stroke-width:.3px;">19,00 €</span>
<span class="t" style="left:618.25px;top:420.60px;font-size:10.4px;letter-spacing:-0.154px;color:#141414;-webkit-text-stroke-width:.3px;">186</span>
<span class="t" style="left:687.00px;top:420.60px;font-size:10.4px;letter-spacing:-0.037px;color:#141414;-webkit-text-stroke-width:.3px;">3.534,00 €</span>
<span class="t" style="left:58.50px;top:454.40px;font-size:10.4px;letter-spacing:-0.045px;color:#141414;-webkit-text-stroke-width:.3px;">IN0005</span>
<span class="t" style="left:181.50px;top:454.40px;font-size:10.4px;letter-spacing:0.321px;color:#141414;-webkit-text-stroke-width:.3px;">Artículo 5</span>
<span class="t" style="left:289.50px;top:454.40px;font-size:10.4px;letter-spacing:-0.312px;color:#141414;-webkit-text-stroke-width:.3px;">Desc 5</span>
<span class="t" style="left:495.00px;top:454.40px;font-size:10.4px;letter-spacing:-0.065px;color:#141414;-webkit-text-stroke-width:.3px;">75,00 €</span>
<span class="t" style="left:624.00px;top:454.40px;font-size:10.4px;letter-spacing:-0.279px;color:#141414;-webkit-text-stroke-width:.3px;">62</span>
<span class="t" style="left:687.00px;top:454.40px;font-size:10.4px;letter-spacing:-0.037px;color:#141414;-webkit-text-stroke-width:.3px;">4.650,00 €</span>
<span class="t" style="left:58.50px;top:487.20px;font-size:10.4px;letter-spacing:-0.045px;color:#141414;-webkit-text-stroke-width:.3px;">IN0006</span>
<span class="t" style="left:181.50px;top:487.20px;font-size:10.4px;letter-spacing:0.321px;color:#141414;-webkit-text-stroke-width:.3px;">Artículo 6</span>
<span class="t" style="left:289.50px;top:487.20px;font-size:10.4px;letter-spacing:-0.312px;color:#141414;-webkit-text-stroke-width:.3px;">Desc 6</span>
<span class="t" style="left:495.00px;top:487.20px;font-size:10.4px;letter-spacing:0.064px;color:#141414;-webkit-text-stroke-width:.3px;">11,00 €</span>
<span class="t" style="left:629.75px;top:487.20px;font-size:10.4px;color:#141414;-webkit-text-stroke-width:.3px;">5</span>
<span class="t" style="left:701.50px;top:487.20px;font-size:10.4px;letter-spacing:-0.065px;color:#141414;-webkit-text-stroke-width:.3px;">55,00 €</span>
<span class="t" style="left:93.00px;top:509.41px;font-size:10.5px;letter-spacing:0.036px;font-weight:700;color:#1e6e43;">Lista de inventario</span>
<span class="t" style="left:7.00px;top:530.96px;font-size:9.5px;letter-spacing:-0.196px;color:#333;">Listo</span>
</div>
</div></div>
</body>
</html>
